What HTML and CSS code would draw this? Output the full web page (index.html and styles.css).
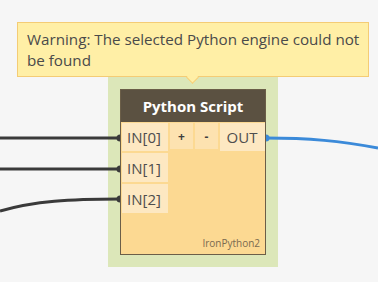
FILE: index.html
```html
<!DOCTYPE html>
<html>
<head>
<meta charset="utf-8">
<link rel="stylesheet" href="styles.css">
</head>
<body>
<div class="canvas">
  <div class="frame">
    <div class="node">
      <div class="header">Python Script</div>
      <div class="body">
        <div class="row">
          <div class="port in">IN[0]</div>
          <div class="btn">+</div>
          <div class="btn">-</div>
          <div class="port out">OUT</div>
        </div>
        <div class="port in second">IN[1]</div>
        <div class="port in third">IN[2]</div>
        <div class="engine">IronPython2</div>
      </div>
    </div>
  </div>
  <svg class="wires" width="378" height="282" viewBox="0 0 378 282">
    <g fill="none" stroke="#3a3a3a" stroke-width="3">
      <path d="M0 138 L120 138"/>
      <path d="M0 169 L120 169"/>
      <path d="M0 211 C 35 201, 70 199, 120 199"/>
    </g>
    <g fill="#3a3a3a">
      <circle cx="120" cy="138" r="3.5"/>
      <circle cx="120" cy="169" r="3.5"/>
      <circle cx="120" cy="199" r="3.5"/>
    </g>
    <path d="M265 138 C 310 138, 340 141, 378 148" fill="none" stroke="#3b8ad9" stroke-width="3"/>
    <circle cx="266" cy="138" r="3.5" fill="#3b8ad9"/>
  </svg>
  <div class="tooltip">Warning: The selected Python engine could not be found</div>
</div>
</body>
</html>
```
FILE: styles.css
```css
html, body {
  margin: 0;
  padding: 0;
  background: #f6f6f6;
}
.canvas {
  position: relative;
  width: 378px;
  height: 282px;
  overflow: hidden;
  font-family: "Open Sans", "Noto Sans", sans-serif;
}
.wires {
  position: absolute;
  left: 0;
  top: 0;
  z-index: 1;
}
.tooltip {
  position: absolute;
  left: 17px;
  top: 22px;
  width: 352px;
  height: 55px;
  box-sizing: border-box;
  padding: 6px 3px 6px 9px;
  background: #ffefa6;
  border: 1px solid #f4cc75;
  color: #4a4a4a;
  font-size: 15.2px;
  line-height: 21px;
  z-index: 3;
}
.tooltip::after {
  content: "";
  position: absolute;
  left: 170px;
  bottom: -6px;
  width: 8px;
  height: 8px;
  background: #ffefa6;
  border-right: 1px solid #f4cc75;
  border-bottom: 1px solid #f4cc75;
  transform: rotate(45deg);
}
.frame {
  position: absolute;
  left: 108px;
  top: 77px;
  width: 170px;
  height: 190px;
  box-sizing: border-box;
  padding: 12px 0 0 12px;
  background: #dce7b9;
}
.node {
  position: relative;
  z-index: 2;
  width: 146px;
  height: 166px;
  box-sizing: border-box;
  display: flex;
  flex-direction: column;
  border: 1px solid #6b5e48;
  background: #fcd992;
}
.header {
  height: 32px;
  background: #5b5141;
  color: #ffffff;
  font-weight: 700;
  font-size: 15px;
  display: flex;
  align-items: center;
  justify-content: center;
  flex-shrink: 0;
}
.body {
  flex: 1;
  display: flex;
  flex-direction: column;
  align-items: flex-start;
  padding: 1px 0 0 1px;
  position: relative;
}
.row {
  display: flex;
  gap: 2px;
  align-items: flex-start;
}
.port {
  height: 28px;
  box-sizing: border-box;
  background: #fde8c2;
  color: #4e4e4e;
  font-size: 15px;
  display: flex;
  align-items: center;
  padding: 0 5px;
}
.port.in {
  width: 46px;
  padding-left: 5px;
}
.port.out {
  width: 45px;
  justify-content: center;
  padding-left: 4px;
}
.port.second {
  margin-top: 2px;
  height: 29px;
}
.port.third {
  margin-top: 2px;
  height: 29px;
}
.btn {
  width: 23px;
  height: 26px;
  background: #fde2b0;
  color: #3e3e3e;
  font-size: 12px;
  font-weight: 700;
  display: flex;
  align-items: center;
  justify-content: center;
}
.engine {
  position: absolute;
  right: 5px;
  bottom: 4px;
  font-size: 10px;
  color: #7a6a50;
}
```
